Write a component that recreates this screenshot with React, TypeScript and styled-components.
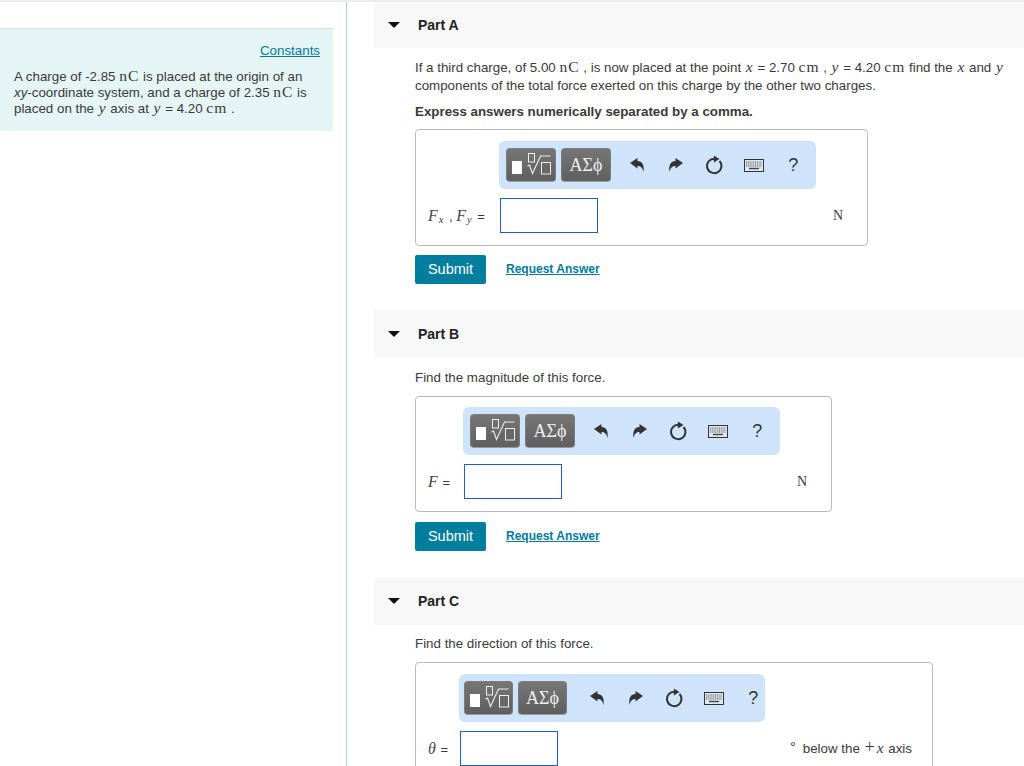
import React from "react";
import styled, { createGlobalStyle } from "styled-components";

const Global = createGlobalStyle`
  html, body { margin: 0; padding: 0; background: #fff; overflow: hidden; }
  body { font-family: "Liberation Sans", Arial, sans-serif; color: #3a3a3a; font-size: 13.33px; }
`;
const Page = styled.div`
  display: flex; width: 1024px; height: 766px; overflow: hidden; box-sizing: border-box;
  border-top: 2px solid #eee; background: #fff;
`;
const Side = styled.aside`
  flex: 0 0 347px; width: 347px; height: 100%; padding-top: 26px; box-sizing: border-box;
  border-right: 1px solid #b3cfe2;
`;
const Info = styled.section`
  width: 333px; height: 103px; box-sizing: border-box; background: #e5f5f5;
  border-top: 1px solid #d7e0e2; padding: 14px 13px 0 14px; line-height: 16px;
`;
const ConstantsRow = styled.div` text-align: right; height: 26px; `;
const Link = styled.a` color: #007b9c; text-decoration: underline; `;
const Main = styled.main` flex: 1; padding-left: 27px; min-width: 0; `;
const PartHeader = styled.div<{ $first?: boolean }>`
  height: ${p => (p.$first ? 46 : 48)}px; background: #f8f8f8; display: flex; align-items: center;
  padding-left: 14px; box-sizing: border-box; font-size: 14px; font-weight: 700; color: #222;
`;
const Caret = styled.span`
  width: 0; height: 0; border-left: 6px solid transparent; border-right: 6px solid transparent;
  border-top: 6px solid #111; margin-right: 18px;
`;
const PartBody = styled.div<{ $top: number }>` padding: ${p => p.$top}px 0 26px 41px; `;
const Para = styled.p` margin: 0 0 8px; line-height: 18px; width: 600px; `;
const Strong = styled.p` margin: 0 0 8px; line-height: 18px; font-weight: 700; `;
const Question = styled.p` margin: 0 0 9px; line-height: 18px; `;
const Box = styled.div<{ $w: number; $top: number; $gap: number }>`
  width: ${p => p.$w}px; box-sizing: border-box; border: 1px solid #bbb; border-radius: 4px;
  padding: ${p => p.$top}px 0 12px; margin: 0 0 ${p => p.$gap}px;
`;
const Toolbar = styled.div<{ $left: number; $w: number; $pad: number }>`
  margin-left: ${p => p.$left}px; width: ${p => p.$w}px; height: 48px; box-sizing: border-box;
  background: #cfe4fb; border-radius: 6px; display: flex; align-items: center; padding-left: ${p => p.$pad}px;
`;
const TplBtn = styled.div<{ $w: number }>`
  flex: none; width: ${p => p.$w}px; height: 34px; border-radius: 4px; margin-right: 5px; box-sizing: border-box;
  background: linear-gradient(#767676, #5f5f5f); border: 1px solid #7d7d7d; border-bottom-color: #9a9a9a;
  display: flex; align-items: center; justify-content: center; color: #eee;
  font-family: "Liberation Serif", serif; font-size: 18px;
`;
const Tools = styled.div<{ $ml: number }>` flex: none; display: flex; margin-left: ${p => p.$ml}px; `;
const Tool = styled.div`
  width: 39.2px; display: flex; justify-content: center; align-items: center; height: 24px; color: #333;
  font-size: 18px;
`;
const InputRow = styled.div` display: flex; align-items: center; height: 35px; margin-top: 9px; `;
const Label = styled.div<{ $w: number }>`
  flex: none; width: ${p => p.$w}px; box-sizing: border-box; padding-left: 12px; font-size: 13px; white-space: nowrap;
`;
const Answer = styled.div` flex: none; width: 98px; height: 35px; box-sizing: border-box; border: 1px solid #1b5fc1; `;
const UnitBox = styled.div<{ $right: number }>`
  margin-left: auto; padding-right: ${p => p.$right}px;
  font-family: "Liberation Serif", serif; font-size: 14px;
`;
const Trail = styled.div` margin-left: auto; padding-right: 20px; font-size: 13.33px; line-height: 16px; `;
const Degree = styled.span` font-size: 15px; line-height: 0; margin-right: 3px; vertical-align: 1px; `;
const Plus = styled.span` font-family: "Liberation Serif", serif; font-size: 18px; line-height: 0; margin: 0 1px; `;
const Actions = styled.div` display: flex; align-items: center; `;
const Submit = styled.button`
  width: 71px; height: 29px; border: 0; border-radius: 2px; background: #007e9e; color: #fff; padding: 0 0 2px;
  font: 14.5px "Liberation Sans", Arial, sans-serif;
`;
const Request = styled.a`
  margin: 0 0 2px 20px; color: #007b9c; font-weight: 700; font-size: 12px; text-decoration: underline;
`;
const V = styled.i` font-family: "Liberation Serif", serif; font-size: 15.5px; padding: 0 1px; line-height: 0; `;
const U = styled.span` font-family: "Liberation Serif", serif; font-size: 15.5px; letter-spacing: 1px; line-height: 0; `;
const Sub = styled.i` font-family: "Liberation Serif", serif; font-size: 10.5px; vertical-align: -2px; margin-right: 2px; `;
const LabelMath = styled.i` font-family: "Liberation Serif", serif; font-size: 16px; color: #444; padding-right: 1px; `;

const TemplateIcon = () => (
  <svg width="46" height="30" viewBox="0 0 46 30" fill="none">
    <rect x="4" y="11" width="10" height="13" fill="#fff" />
    <rect x="20.5" y="3.5" width="6" height="8.5" stroke="#eee" />
    <path d="M19.5 16l2-1 3 8.5 8-17.5h10" stroke="#eee" strokeWidth="1.1" />
    <rect x="33.5" y="12.5" width="9" height="11.5" stroke="#eee" />
  </svg>
);
const Undo = () => (
  <svg width="16" height="16" viewBox="0 0 16 16">
    <path d="M1 6 8.5 1v3c4.500 0 7 3.500 6 11-1-3.500-2-6-6-6v2.500z" fill="#333" />
  </svg>
);
const Redo = () => (
  <svg width="16" height="16" viewBox="0 0 16 16">
    <path d="M15 6 7.500 1v3c-4.500 0-7 3.500-6 11 1-3.500 2-6 6-6v2.500z" fill="#333" />
  </svg>
);
const Reset = () => (
  <svg width="18" height="20" viewBox="0 0 18 20" fill="none">
    <path d="M13.500 6A7.200 7.200 0 1 1 8.500 3.700" stroke="#333" strokeWidth="2" />
    <path d="M7.800 .5 13.500 4 7.800 7.500z" fill="#333" />
  </svg>
);
const Keyboard = () => (
  <svg width="20" height="13" viewBox="0 0 20 13" fill="none">
    <rect x=".5" y=".5" width="19" height="12" fill="#dfe6ee" stroke="#333" />
    <path d="M2 3h16M2 5h16M2 7h16" stroke="#555" strokeDasharray="1 .8" />
    <path d="M5 9.500h10" stroke="#444" strokeWidth="1.4" />
  </svg>
);

type BarProps = { left: number; w: number; pad: number; bw: number; ml: number };
const Bar = ({ left, w, pad, bw, ml }: BarProps) => (
  <Toolbar $left={left} $w={w} $pad={pad}>
    <TplBtn $w={bw}><TemplateIcon /></TplBtn>
    <TplBtn $w={bw}>ΑΣϕ</TplBtn>
    <Tools $ml={ml}>
      <Tool><Undo /></Tool>
      <Tool><Redo /></Tool>
      <Tool><Reset /></Tool>
      <Tool><Keyboard /></Tool>
      <Tool>?</Tool>
    </Tools>
  </Toolbar>
);
const Buttons = () => (
  <Actions>
    <Submit>Submit</Submit>
    <Request>Request Answer</Request>
  </Actions>
);

export default function App() {
  return (
    <Page>
      <Global />
      <Side>
        <Info>
          <ConstantsRow><Link>Constants</Link></ConstantsRow>
          A charge of -2.85 <U>nC</U> is placed at the origin of an<br />
          <em>xy</em>-coordinate system, and a charge of 2.35 <U>nC</U> is<br />
          placed on the <V>y</V> axis at <V>y</V> = 4.20 <U>cm</U> .
        </Info>
      </Side>
      <Main>
        <PartHeader $first><Caret />Part A</PartHeader>
        <PartBody $top={11}>
          <Para>
            If a third charge, of 5.00 <U>nC</U> , is now placed at the point <V>x</V> = 2.70 <U>cm</U> , <V>y</V> = 4.20 <U>cm</U> find the <V>x</V> and <V>y</V> components of the total force exerted on this charge by the other two charges.
          </Para>
          <Strong>Express answers numerically separated by a comma.</Strong>
          <Box $w={453} $top={11} $gap={9}>
            <Bar left={83} w={317} pad={7} bw={50} ml={1} />
            <InputRow>
              <Label $w={84}><LabelMath>F</LabelMath><Sub>x</Sub> , <LabelMath>F</LabelMath><Sub>y</Sub> =</Label>
              <Answer />
              <UnitBox $right={24}>N</UnitBox>
            </InputRow>
          </Box>
          <Buttons />
        </PartBody>
        <PartHeader><Caret />Part B</PartHeader>
        <PartBody $top={11}>
          <Question>Find the magnitude of this force.</Question>
          <Box $w={417} $top={10} $gap={10}>
            <Bar left={47} w={317} pad={7} bw={50} ml={1} />
            <InputRow>
              <Label $w={48}><LabelMath>F</LabelMath> =</Label>
              <Answer />
              <UnitBox $right={24}>N</UnitBox>
            </InputRow>
          </Box>
          <Buttons />
        </PartBody>
        <PartHeader><Caret />Part C</PartHeader>
        <PartBody $top={10}>
          <Question>Find the direction of this force.</Question>
          <Box $w={518} $top={11} $gap={0}>
            <Bar left={43} w={306} pad={5} bw={49} ml={5} />
            <InputRow>
              <Label $w={44}><LabelMath>θ</LabelMath> =</Label>
              <Answer />
              <Trail><Degree>°</Degree> below the <Plus>+</Plus><V>x</V> axis</Trail>
            </InputRow>
          </Box>
        </PartBody>
      </Main>
    </Page>
  );
}
